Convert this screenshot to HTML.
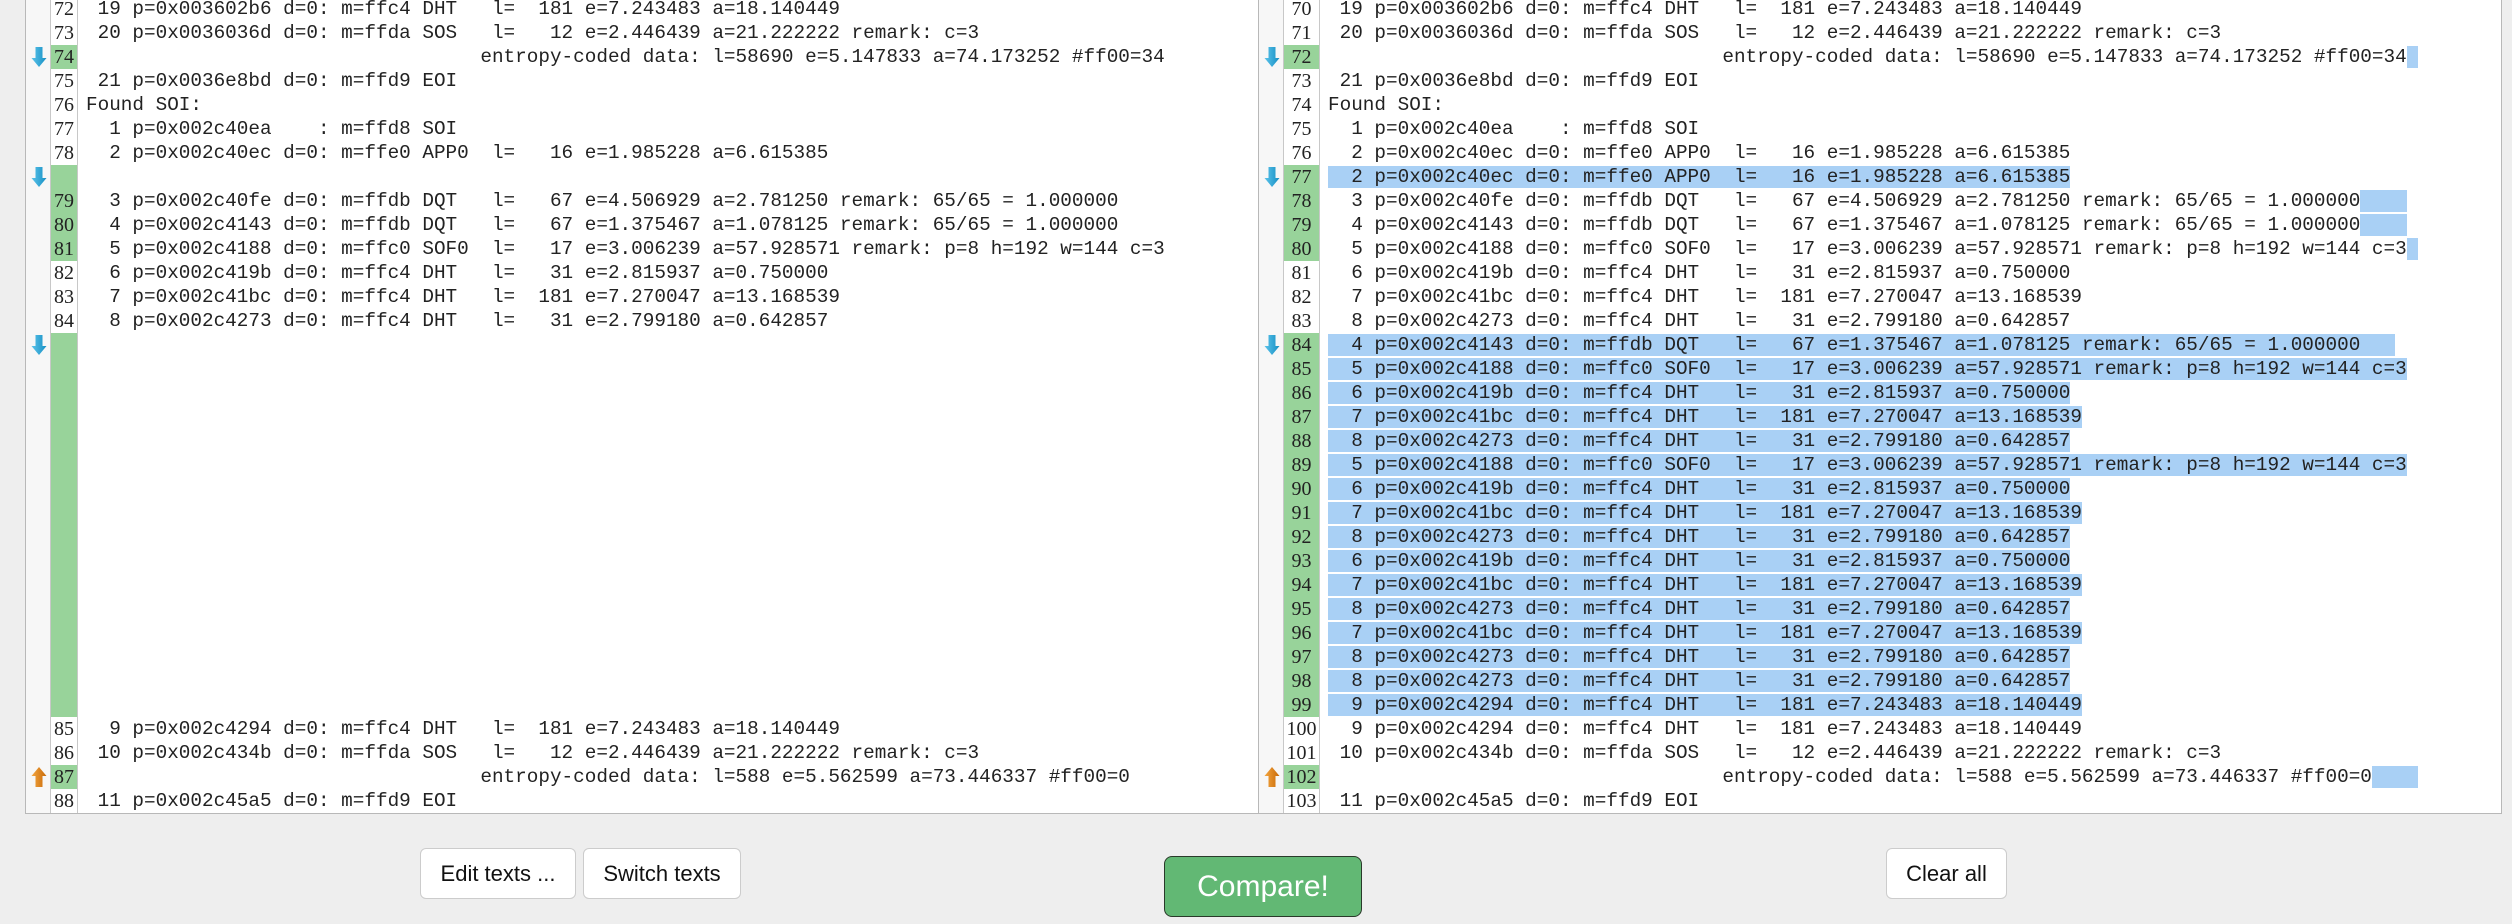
<!DOCTYPE html>
<html><head><meta charset="utf-8"><style>
html,body{margin:0;padding:0;}
body{width:2512px;height:924px;background:#eeeeee;position:relative;overflow:hidden;font-family:"Liberation Sans",sans-serif;}
.panel{position:absolute;top:-3px;height:816px;background:#fff;border-bottom:1px solid #b8b8b8;overflow:hidden;}
.gut{position:absolute;top:0;bottom:0;background:#f7f7f7;border-right:1px solid #c8c8c8;}
.num{position:absolute;top:0;bottom:0;background:#fff;border-right:1px solid #c8c8c8;}
.n{position:absolute;left:0;right:0;height:24px;line-height:24px;text-align:center;font-family:"Liberation Serif",serif;font-size:20px;color:#222;}
.g{background:#98d39a;}
.t{position:absolute;left:0;height:24px;line-height:24px;white-space:pre;font-family:"Liberation Mono",monospace;font-size:19.33px;color:#222;}
.h{background:#a9d0f5;}
.ar{position:absolute;width:16px;height:22px;}
.btn{position:absolute;background:#fff;border:1px solid #ccc;border-radius:6px;font-size:22px;color:#111;text-align:center;box-sizing:border-box;line-height:49px;}
</style></head><body>

<svg width="0" height="0" style="position:absolute">
<defs>
<linearGradient id="bl" x1="0" x2="1"><stop offset="0" stop-color="#5cc3ea"/><stop offset="1" stop-color="#1690c4"/></linearGradient>
<linearGradient id="or" x1="0" x2="1"><stop offset="0" stop-color="#f4a640"/><stop offset="1" stop-color="#c86a08"/></linearGradient>
</defs></svg>

<!-- LEFT PANEL -->
<div class="panel" style="left:25px;width:1233px;border-left:1px solid #b8b8b8;">
 <div class="gut" style="left:0;width:24px;"></div>
 <div class="num" style="left:25px;width:26px;">
  <div class="n" style="top:0">72</div>
  <div class="n" style="top:24px">73</div>
  <div class="n g" style="top:48px">74</div>
  <div class="n" style="top:72px">75</div>
  <div class="n" style="top:96px">76</div>
  <div class="n" style="top:120px">77</div>
  <div class="n" style="top:144px">78</div>
  <div class="n g" style="top:168px"></div>
  <div class="n g" style="top:192px">79</div>
  <div class="n g" style="top:216px">80</div>
  <div class="n g" style="top:240px">81</div>
  <div class="n" style="top:264px">82</div>
  <div class="n" style="top:288px">83</div>
  <div class="n" style="top:312px">84</div>
  <div class="n g" style="top:336px;height:384px"></div>
  <div class="n" style="top:720px">85</div>
  <div class="n" style="top:744px">86</div>
  <div class="n g" style="top:768px">87</div>
  <div class="n" style="top:792px">88</div>
 </div>
 <svg class="ar" style="left:5px;top:49px" viewBox="0 0 16 22"><path d="M4.5 1H11.5V12H15.5L8 21L0.5 12H4.5Z" fill="url(#bl)"/></svg>
 <svg class="ar" style="left:5px;top:169px" viewBox="0 0 16 22"><path d="M4.5 1H11.5V12H15.5L8 21L0.5 12H4.5Z" fill="url(#bl)"/></svg>
 <svg class="ar" style="left:5px;top:337px" viewBox="0 0 16 22"><path d="M4.5 1H11.5V12H15.5L8 21L0.5 12H4.5Z" fill="url(#bl)"/></svg>
 <svg class="ar" style="left:5px;top:769px" viewBox="0 0 16 22"><path d="M4.5 21H11.5V10H15.5L8 1L0.5 10H4.5Z" fill="url(#or)"/></svg>
 <div style="position:absolute;left:60px;top:0;">
<div class="t" style="top:0"> 19 p=0x003602b6 d=0: m=ffc4 DHT   l=  181 e=7.243483 a=18.140449</div>
<div class="t" style="top:24px"> 20 p=0x0036036d d=0: m=ffda SOS   l=   12 e=2.446439 a=21.222222 remark: c=3</div>
<div class="t" style="top:48px">                                  entropy-coded data: l=58690 e=5.147833 a=74.173252 #ff00=34</div>
<div class="t" style="top:72px"> 21 p=0x0036e8bd d=0: m=ffd9 EOI</div>
<div class="t" style="top:96px">Found SOI:</div>
<div class="t" style="top:120px">  1 p=0x002c40ea    : m=ffd8 SOI</div>
<div class="t" style="top:144px">  2 p=0x002c40ec d=0: m=ffe0 APP0  l=   16 e=1.985228 a=6.615385</div>
<div class="t" style="top:192px">  3 p=0x002c40fe d=0: m=ffdb DQT   l=   67 e=4.506929 a=2.781250 remark: 65/65 = 1.000000</div>
<div class="t" style="top:216px">  4 p=0x002c4143 d=0: m=ffdb DQT   l=   67 e=1.375467 a=1.078125 remark: 65/65 = 1.000000</div>
<div class="t" style="top:240px">  5 p=0x002c4188 d=0: m=ffc0 SOF0  l=   17 e=3.006239 a=57.928571 remark: p=8 h=192 w=144 c=3</div>
<div class="t" style="top:264px">  6 p=0x002c419b d=0: m=ffc4 DHT   l=   31 e=2.815937 a=0.750000</div>
<div class="t" style="top:288px">  7 p=0x002c41bc d=0: m=ffc4 DHT   l=  181 e=7.270047 a=13.168539</div>
<div class="t" style="top:312px">  8 p=0x002c4273 d=0: m=ffc4 DHT   l=   31 e=2.799180 a=0.642857</div>
<div class="t" style="top:720px">  9 p=0x002c4294 d=0: m=ffc4 DHT   l=  181 e=7.243483 a=18.140449</div>
<div class="t" style="top:744px"> 10 p=0x002c434b d=0: m=ffda SOS   l=   12 e=2.446439 a=21.222222 remark: c=3</div>
<div class="t" style="top:768px">                                  entropy-coded data: l=588 e=5.562599 a=73.446337 #ff00=0</div>
<div class="t" style="top:792px"> 11 p=0x002c45a5 d=0: m=ffd9 EOI</div>
 </div>
</div>

<!-- RIGHT PANEL -->
<div class="panel" style="left:1258px;width:1242px;border-left:1px solid #b8b8b8;border-right:1px solid #b8b8b8;">
 <div class="gut" style="left:0;width:24px;"></div>
 <div class="num" style="left:25px;width:35px;">
  <div class="n" style="top:0">70</div>
  <div class="n" style="top:24px">71</div>
  <div class="n g" style="top:48px">72</div>
  <div class="n" style="top:72px">73</div>
  <div class="n" style="top:96px">74</div>
  <div class="n" style="top:120px">75</div>
  <div class="n" style="top:144px">76</div>
  <div class="n g" style="top:168px">77</div>
  <div class="n g" style="top:192px">78</div>
  <div class="n g" style="top:216px">79</div>
  <div class="n g" style="top:240px">80</div>
  <div class="n" style="top:264px">81</div>
  <div class="n" style="top:288px">82</div>
  <div class="n" style="top:312px">83</div>
  <div class="n g" style="top:336px">84</div>
  <div class="n g" style="top:360px">85</div>
  <div class="n g" style="top:384px">86</div>
  <div class="n g" style="top:408px">87</div>
  <div class="n g" style="top:432px">88</div>
  <div class="n g" style="top:456px">89</div>
  <div class="n g" style="top:480px">90</div>
  <div class="n g" style="top:504px">91</div>
  <div class="n g" style="top:528px">92</div>
  <div class="n g" style="top:552px">93</div>
  <div class="n g" style="top:576px">94</div>
  <div class="n g" style="top:600px">95</div>
  <div class="n g" style="top:624px">96</div>
  <div class="n g" style="top:648px">97</div>
  <div class="n g" style="top:672px">98</div>
  <div class="n g" style="top:696px">99</div>
  <div class="n" style="top:720px">100</div>
  <div class="n" style="top:744px">101</div>
  <div class="n g" style="top:768px">102</div>
  <div class="n" style="top:792px">103</div>
 </div>
 <svg class="ar" style="left:5px;top:49px" viewBox="0 0 16 22"><path d="M4.5 1H11.5V12H15.5L8 21L0.5 12H4.5Z" fill="url(#bl)"/></svg>
 <svg class="ar" style="left:5px;top:169px" viewBox="0 0 16 22"><path d="M4.5 1H11.5V12H15.5L8 21L0.5 12H4.5Z" fill="url(#bl)"/></svg>
 <svg class="ar" style="left:5px;top:337px" viewBox="0 0 16 22"><path d="M4.5 1H11.5V12H15.5L8 21L0.5 12H4.5Z" fill="url(#bl)"/></svg>
 <svg class="ar" style="left:5px;top:769px" viewBox="0 0 16 22"><path d="M4.5 21H11.5V10H15.5L8 1L0.5 10H4.5Z" fill="url(#or)"/></svg>
 <div style="position:absolute;left:69px;top:0;">
<div class="t" style="top:0"> 19 p=0x003602b6 d=0: m=ffc4 DHT   l=  181 e=7.243483 a=18.140449</div>
<div class="t" style="top:24px"> 20 p=0x0036036d d=0: m=ffda SOS   l=   12 e=2.446439 a=21.222222 remark: c=3</div>
<div class="t" style="top:48px">                                  entropy-coded data: l=58690 e=5.147833 a=74.173252 #ff00=34<span class="h"> </span></div>
<div class="t" style="top:72px"> 21 p=0x0036e8bd d=0: m=ffd9 EOI</div>
<div class="t" style="top:96px">Found SOI:</div>
<div class="t" style="top:120px">  1 p=0x002c40ea    : m=ffd8 SOI</div>
<div class="t" style="top:144px">  2 p=0x002c40ec d=0: m=ffe0 APP0  l=   16 e=1.985228 a=6.615385</div>
<div class="t" style="top:168px"><span class="h">  2 p=0x002c40ec d=0: m=ffe0 APP0  l=   16 e=1.985228 a=6.615385</span></div>
<div class="t" style="top:192px">  3 p=0x002c40fe d=0: m=ffdb DQT   l=   67 e=4.506929 a=2.781250 remark: 65/65 = 1.000000<span class="h">    </span></div>
<div class="t" style="top:216px">  4 p=0x002c4143 d=0: m=ffdb DQT   l=   67 e=1.375467 a=1.078125 remark: 65/65 = 1.000000<span class="h">    </span></div>
<div class="t" style="top:240px">  5 p=0x002c4188 d=0: m=ffc0 SOF0  l=   17 e=3.006239 a=57.928571 remark: p=8 h=192 w=144 c=3<span class="h"> </span></div>
<div class="t" style="top:264px">  6 p=0x002c419b d=0: m=ffc4 DHT   l=   31 e=2.815937 a=0.750000</div>
<div class="t" style="top:288px">  7 p=0x002c41bc d=0: m=ffc4 DHT   l=  181 e=7.270047 a=13.168539</div>
<div class="t" style="top:312px">  8 p=0x002c4273 d=0: m=ffc4 DHT   l=   31 e=2.799180 a=0.642857</div>
<div class="t" style="top:336px"><span class="h">  4 p=0x002c4143 d=0: m=ffdb DQT   l=   67 e=1.375467 a=1.078125 remark: 65/65 = 1.000000   </span></div>
<div class="t" style="top:360px"><span class="h">  5 p=0x002c4188 d=0: m=ffc0 SOF0  l=   17 e=3.006239 a=57.928571 remark: p=8 h=192 w=144 c=3</span></div>
<div class="t" style="top:384px"><span class="h">  6 p=0x002c419b d=0: m=ffc4 DHT   l=   31 e=2.815937 a=0.750000</span></div>
<div class="t" style="top:408px"><span class="h">  7 p=0x002c41bc d=0: m=ffc4 DHT   l=  181 e=7.270047 a=13.168539</span></div>
<div class="t" style="top:432px"><span class="h">  8 p=0x002c4273 d=0: m=ffc4 DHT   l=   31 e=2.799180 a=0.642857</span></div>
<div class="t" style="top:456px"><span class="h">  5 p=0x002c4188 d=0: m=ffc0 SOF0  l=   17 e=3.006239 a=57.928571 remark: p=8 h=192 w=144 c=3</span></div>
<div class="t" style="top:480px"><span class="h">  6 p=0x002c419b d=0: m=ffc4 DHT   l=   31 e=2.815937 a=0.750000</span></div>
<div class="t" style="top:504px"><span class="h">  7 p=0x002c41bc d=0: m=ffc4 DHT   l=  181 e=7.270047 a=13.168539</span></div>
<div class="t" style="top:528px"><span class="h">  8 p=0x002c4273 d=0: m=ffc4 DHT   l=   31 e=2.799180 a=0.642857</span></div>
<div class="t" style="top:552px"><span class="h">  6 p=0x002c419b d=0: m=ffc4 DHT   l=   31 e=2.815937 a=0.750000</span></div>
<div class="t" style="top:576px"><span class="h">  7 p=0x002c41bc d=0: m=ffc4 DHT   l=  181 e=7.270047 a=13.168539</span></div>
<div class="t" style="top:600px"><span class="h">  8 p=0x002c4273 d=0: m=ffc4 DHT   l=   31 e=2.799180 a=0.642857</span></div>
<div class="t" style="top:624px"><span class="h">  7 p=0x002c41bc d=0: m=ffc4 DHT   l=  181 e=7.270047 a=13.168539</span></div>
<div class="t" style="top:648px"><span class="h">  8 p=0x002c4273 d=0: m=ffc4 DHT   l=   31 e=2.799180 a=0.642857</span></div>
<div class="t" style="top:672px"><span class="h">  8 p=0x002c4273 d=0: m=ffc4 DHT   l=   31 e=2.799180 a=0.642857</span></div>
<div class="t" style="top:696px"><span class="h">  9 p=0x002c4294 d=0: m=ffc4 DHT   l=  181 e=7.243483 a=18.140449</span></div>
<div class="t" style="top:720px">  9 p=0x002c4294 d=0: m=ffc4 DHT   l=  181 e=7.243483 a=18.140449</div>
<div class="t" style="top:744px"> 10 p=0x002c434b d=0: m=ffda SOS   l=   12 e=2.446439 a=21.222222 remark: c=3</div>
<div class="t" style="top:768px">                                  entropy-coded data: l=588 e=5.562599 a=73.446337 #ff00=0<span class="h">    </span></div>
<div class="t" style="top:792px"> 11 p=0x002c45a5 d=0: m=ffd9 EOI</div>
 </div>
</div>

<div class="btn" style="left:420px;top:848px;width:156px;height:51px;">Edit texts ...</div>
<div class="btn" style="left:583px;top:848px;width:158px;height:51px;">Switch texts</div>
<div class="btn" style="left:1164px;top:856px;width:198px;height:61px;background:#62b874;border:1px solid #2a3a2a;border-radius:8px;color:#fff;font-size:30px;line-height:59px;">Compare!</div>
<div class="btn" style="left:1886px;top:848px;width:121px;height:51px;">Clear all</div>

</body></html>
